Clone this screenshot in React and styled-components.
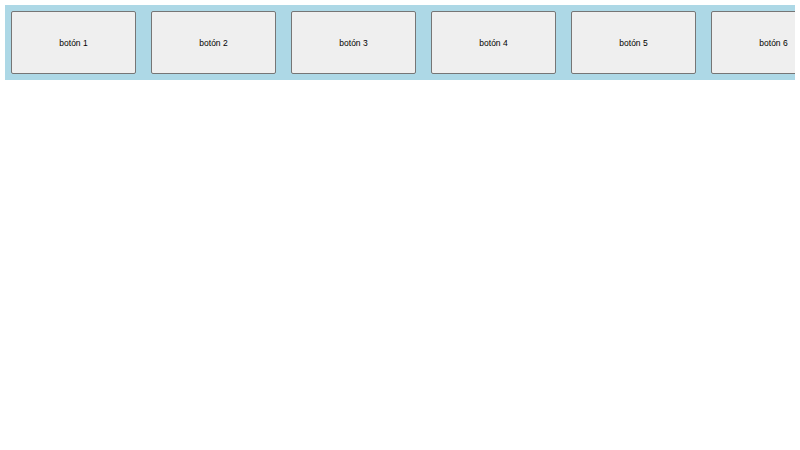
import React from 'react';
import styled, { createGlobalStyle } from 'styled-components';

const GlobalStyle = createGlobalStyle`
  body {
    margin: 5px;
    background: #ffffff;
    font-family: "Liberation Sans", Arial, sans-serif;
  }
`;

const Toolbar = styled.div`
  display: flex;
  gap: 15px;
  padding: 6px;
  background-color: lightblue;
  overflow: hidden;
`;

const Boton = styled.button`
  flex: 0 0 125px;
  height: 63px;
  margin: 0;
  padding: 0;
  background-color: #efefef;
  border: 1px solid #767676;
  border-radius: 2px;
  font-family: "Liberation Sans", Arial, sans-serif;
  font-size: 8.5px;
  color: #000000;
`;

const labels = ['botón 1', 'botón 2', 'botón 3', 'botón 4', 'botón 5', 'botón 6'];

export default function App() {
  return (
    <>
      <GlobalStyle />
      <Toolbar>
        {labels.map((label) => (
          <Boton key={label}>{label}</Boton>
        ))}
      </Toolbar>
    </>
  );
}
